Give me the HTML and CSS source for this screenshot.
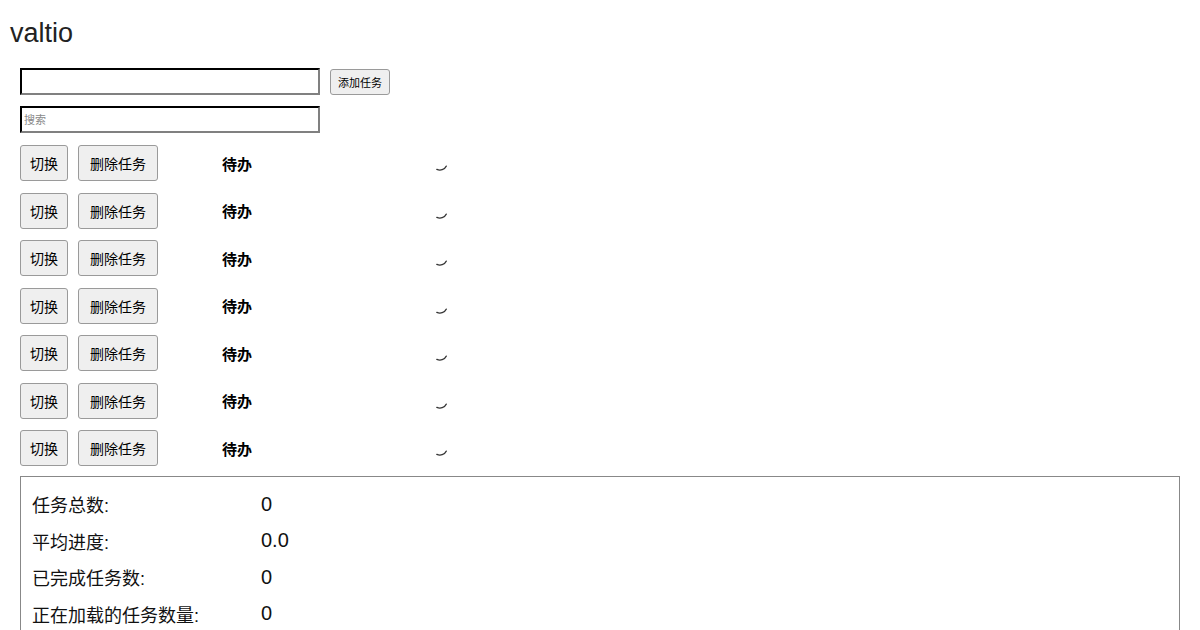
FILE: index.html
```html
<!DOCTYPE html>
<html lang="zh">
<head>
<meta charset="utf-8">
<title>valtio</title>
<link rel="stylesheet" href="styles.css">
</head>
<body>
<div class="page">
  <h1 class="title">valtio</h1>
  <div class="content">
    <div class="add-row">
      <input class="text-input" type="text">
      <button class="small-btn">添加任务</button>
    </div>
    <div class="search-row">
      <input class="text-input" type="text" placeholder="搜索">
    </div>
    <ul class="tasks">
      <li class="task"><button class="btn">切换</button><button class="btn">删除任务</button><span class="status">待办</span><svg class="spinner" viewBox="0 0 16 16"><path d="M4.9 14.4 A7 7 0 0 0 14.2 11.2" /></svg></li>
      <li class="task"><button class="btn">切换</button><button class="btn">删除任务</button><span class="status">待办</span><svg class="spinner" viewBox="0 0 16 16"><path d="M4.9 14.4 A7 7 0 0 0 14.2 11.2" /></svg></li>
      <li class="task"><button class="btn">切换</button><button class="btn">删除任务</button><span class="status">待办</span><svg class="spinner" viewBox="0 0 16 16"><path d="M4.9 14.4 A7 7 0 0 0 14.2 11.2" /></svg></li>
      <li class="task"><button class="btn">切换</button><button class="btn">删除任务</button><span class="status">待办</span><svg class="spinner" viewBox="0 0 16 16"><path d="M4.9 14.4 A7 7 0 0 0 14.2 11.2" /></svg></li>
      <li class="task"><button class="btn">切换</button><button class="btn">删除任务</button><span class="status">待办</span><svg class="spinner" viewBox="0 0 16 16"><path d="M4.9 14.4 A7 7 0 0 0 14.2 11.2" /></svg></li>
      <li class="task"><button class="btn">切换</button><button class="btn">删除任务</button><span class="status">待办</span><svg class="spinner" viewBox="0 0 16 16"><path d="M4.9 14.4 A7 7 0 0 0 14.2 11.2" /></svg></li>
      <li class="task"><button class="btn">切换</button><button class="btn">删除任务</button><span class="status">待办</span><svg class="spinner" viewBox="0 0 16 16"><path d="M4.9 14.4 A7 7 0 0 0 14.2 11.2" /></svg></li>
    </ul>
    <div class="stats">
      <div class="stat"><span class="stat-label">任务总数:</span><span class="stat-value">0</span></div>
      <div class="stat"><span class="stat-label">平均进度:</span><span class="stat-value">0.0</span></div>
      <div class="stat"><span class="stat-label">已完成任务数:</span><span class="stat-value">0</span></div>
      <div class="stat"><span class="stat-label">正在加载的任务数量:</span><span class="stat-value">0</span></div>
    </div>
  </div>
</div>
</body>
</html>
```

FILE: styles.css
```css
* { box-sizing: border-box; }

html, body {
  margin: 0;
  padding: 0;
  background: #ffffff;
  color: #000000;
  font-family: "Liberation Sans", "Noto Sans CJK SC", sans-serif;
}

.page {
  padding: 10px;
}

.title {
  margin: 8px 0 0 0;
  font-size: 27px;
  font-weight: normal;
  line-height: 30px;
  color: #222222;
}

.content {
  padding: 20px 10px 0 10px;
  display: flex;
  flex-direction: column;
}

.add-row,
.search-row {
  display: flex;
  align-items: center;
  height: 27px;
}

.search-row {
  margin-top: 11px;
}

.text-input {
  width: 300px;
  height: 27px;
  border: 2px inset #767676;
  border-top-color: #1a1a1a;
  border-left-color: #1a1a1a;
  border-bottom-color: #808080;
  border-right-color: #808080;
  padding: 1px 2px;
  font-family: "Liberation Sans", "Noto Sans CJK SC", sans-serif;
  font-size: 11px;
  background: #ffffff;
  outline: none;
}

.text-input::placeholder {
  color: #8a8a8a;
}

.small-btn {
  margin-left: 10px;
  height: 26px;
  padding: 0 7px;
  font-family: "Liberation Sans", "Noto Sans CJK SC", sans-serif;
  font-size: 11px;
  color: #000;
  background: #efefef;
  border: 1px solid #9a9a9a;
  border-radius: 3px;
}

.tasks {
  list-style: none;
  margin: 12px 0 0 0;
  padding: 0;
  display: flex;
  flex-direction: column;
  gap: 11.5px;
}

.task {
  display: flex;
  align-items: center;
  height: 36px;
}

.btn {
  height: 36px;
  padding: 0 9px;
  margin-right: 10px;
  font-family: "Liberation Sans", "Noto Sans CJK SC", sans-serif;
  font-size: 14px;
  color: #000;
  background: #efefef;
  border: 1px solid #9a9a9a;
  border-radius: 3px;
}

.btn + .btn {
  padding: 0 11px;
}

.status {
  margin-left: 54px;
  width: 210px;
  font-size: 15px;
  font-weight: bold;
}

.spinner {
  width: 16px;
  height: 16px;
  fill: none;
  stroke: #333333;
  stroke-width: 1.4;
  stroke-linecap: round;
}

.stats {
  margin-top: 10px;
  border: 1px solid #888888;
  border-bottom: none;
  padding: 9px 11px 0 11px;
  height: 160px;
}

.stat {
  display: flex;
  align-items: center;
  height: 36.5px;
  color: #111111;
}

.stat-label {
  width: 229px;
  font-size: 18px;
}

.stat-value {
  font-size: 20px;
}
```
